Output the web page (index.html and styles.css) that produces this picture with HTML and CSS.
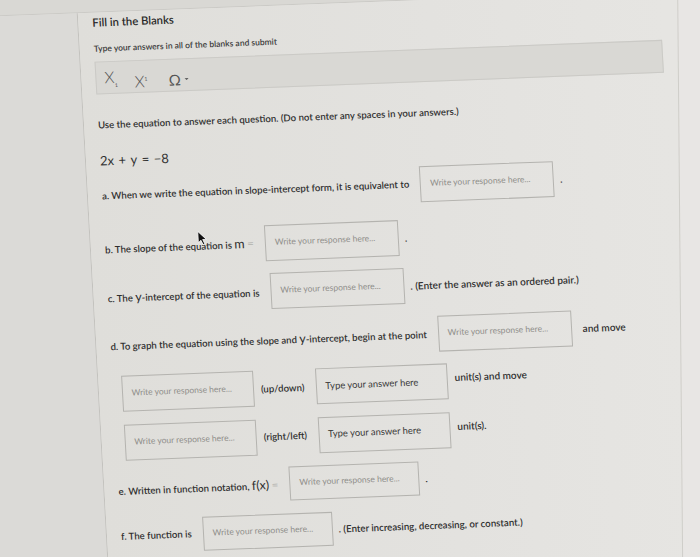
FILE: index.html
```html
<!DOCTYPE html>
<html lang="en">
<head>
<meta charset="utf-8">
<title>Fill in the Blanks</title>
<link rel="stylesheet" href="styles.css">
</head>
<body>
<div class="page">
  <header class="topbar"></header>
  <aside class="gutter"></aside>
  <main class="main">
    <h1 class="title">Fill in the Blanks</h1>
    <p class="subtitle">Type your answers in all of the blanks and submit</p>
    <div class="toolbar">
      <span class="tool">X<sub>1</sub></span>
      <span class="tool tool-sup">X<sup>1</sup></span>
      <span class="tool omega">Ω</span><span class="caret"></span>
    </div>
    <p class="intro">Use the equation to answer each question. (Do not enter any spaces in your answers.)</p>
    <p class="equation">2x<span class="op">+</span>y<span class="op">=</span>−8</p>

    <div class="row">
      <span class="label">a. When we write the equation in slope-intercept form, it is equivalent to</span>
      <span class="field">Write your response here...</span>
      <span class="tail">.</span>
    </div>
    <div class="row row-b">
      <span class="label">b. The slope of the equation is <span class="math">m</span> <span class="eq">=</span></span>
      <span class="field">Write your response here...</span>
      <span class="tail">.</span>
    </div>
    <div class="row">
      <span class="label">c. The <span class="math">y</span>-intercept of the equation is</span>
      <span class="field">Write your response here...</span>
      <span class="tail">. (Enter the answer as an ordered pair.)</span>
    </div>
    <div class="row">
      <span class="label">d. To graph the equation using the slope and <span class="math">y</span>-intercept, begin at the point</span>
      <span class="field">Write your response here...</span>
      <span class="tail tail-wide">and move</span>
    </div>
    <div class="row grid">
      <span class="field">Write your response here...</span>
      <span class="label">(up/down)</span>
      <span class="field answer">Type your answer here</span>
      <span class="tail note-up">unit(s) and move</span>
    </div>
    <div class="row grid">
      <span class="field">Write your response here...</span>
      <span class="label">(right/left)</span>
      <span class="field answer">Type your answer here</span>
      <span class="tail note-up">unit(s).</span>
    </div>
    <div class="row row-short">
      <span class="label">e. Written in function notation, <span class="math">f(x)</span> <span class="eq">=</span></span>
      <span class="field field-sm">Write your response here...</span>
      <span class="tail">.</span>
    </div>
    <div class="row row-short">
      <span class="label">f. The function is</span>
      <span class="field field-sm">Write your response here...</span>
      <span class="tail tail-sm">. (Enter increasing, decreasing, or constant.)</span>
    </div>

    <svg class="cursor" width="10" height="15" viewBox="0 0 10 15" aria-hidden="true">
      <path d="M0.6 0.6 L0.6 12 L3.3 9.6 L5.2 14 L7 13.2 L5.1 8.9 L8.8 8.9 Z" fill="#111" stroke="#fff" stroke-width="0.8"/>
    </svg>
  </main>
  <aside class="rail"></aside>
</div>
</body>
</html>
```

FILE: styles.css
```css
* { box-sizing: border-box; }

html, body { margin: 0; padding: 0; }

body {
  width: 700px;
  height: 557px;
  overflow: hidden;
  background: #d7d6d2;
  font-family: "Lato", "Noto Sans", sans-serif;
  color: #2f2f2f;
}

/* the photographed screen is slightly turned; the page is laid out flat and tilted as a whole */
.page {
  width: 760px;
  height: 620px;
  margin: -31.5px 0 0 -30px;
  display: grid;
  grid-template-columns: 123px 586px 51px;
  grid-template-rows: 33.5px 586.5px;
  background: #e6e5e2;
  transform: rotate(-2.2deg) skewX(1deg);
  transform-origin: 50% 50%;
}

.topbar {
  grid-column: 1 / -1;
  background: #d9d8d4;
  border-bottom: 1px solid #cbcac6;
}

.gutter {
  background: #dbdad7;
  border-right: 1px solid #c3c2be;
}

.main {
  position: relative;
  background: linear-gradient(90deg, #dfdeda, #e3e2df 60%, #e6e5e2);
  padding: 2px 4px 0 14px;
}

.rail {
  background: #e8e6e4;
  border-left: 1px solid #cfcec9;
  transform: skewX(-2.7deg);
}

.title {
  margin: 0;
  font-size: 11.3px;
  line-height: 15px;
  font-weight: 600;
  color: #2a2a2a;
}

.subtitle {
  margin: 14px 0 0;
  font-size: 8.5px;
  line-height: 11px;
  font-weight: 600;
  color: #3a3a3a;
}

.toolbar {
  margin-top: 7px;
  height: 33px;
  background: #d9d8d4;
  border: 1px solid #cbcac6;
  display: flex;
  align-items: center;
  padding: 9px 0 0 8px;
  color: #555;
}

.tool {
  width: 30px;
  font-size: 16px;
  font-weight: 300;
  line-height: 16px;
}

.tool-sup { width: 34px; }

.tool sub, .tool sup {
  font-size: 5px;
  font-weight: 400;
}

.tool.omega {
  width: auto;
  font-size: 15px;
  font-weight: 400;
}

.caret {
  margin-left: 4px;
  width: 0;
  height: 0;
  border-left: 2px solid transparent;
  border-right: 2px solid transparent;
  border-top: 2px solid #555;
}

.intro {
  margin: 24px 0 0;
  font-size: 9.6px;
  line-height: 13px;
  font-weight: 600;
}

.equation {
  margin: 21.5px 0 0;
  font-size: 13px;
  line-height: 16px;
  color: #333;
}

.op { margin: 0 4.5px; }

.row {
  display: flex;
  align-items: center;
  gap: 11px;
  height: 36px;
  margin-top: 12.5px;
}

.equation + .row { margin-top: 9.5px; }

.row-b { margin-top: 17px; }

.row-short { height: 34px; }

.row.grid {
  display: grid;
  grid-template-columns: 132px 47px 132px auto;
  column-gap: 7.5px;
  padding-left: 8.5px;
}

.label {
  white-space: nowrap;
  font-size: 9.6px;
  font-weight: 600;
}

.math {
  font-size: 12.5px;
  font-weight: 400;
}

.eq {
  font-size: 12px;
  font-weight: 300;
  color: #9a9995;
}

.field {
  flex: none;
  width: 134px;
  height: 100%;
  border: 1px solid #b4b3af;
  padding: 0 9px 2px;
  display: flex;
  align-items: center;
  font-size: 8.5px;
  color: #8f8e8a;
  white-space: nowrap;
}

.row.grid .field { width: 132px; }

.field-sm { width: 130px; }

.field.answer {
  font-size: 9.4px;
  color: #3a3a3a;
}

.tail {
  margin-left: -5px;
  white-space: nowrap;
  font-size: 10px;
  font-weight: 600;
}

.tail-wide { margin-left: 0; }

.tail-sm { font-size: 9.7px; }

.row.grid .tail { margin-left: 0; }

.note-up { margin-bottom: 8px; }

.cursor {
  position: absolute;
  left: 107px;
  top: 222px;
}
```
